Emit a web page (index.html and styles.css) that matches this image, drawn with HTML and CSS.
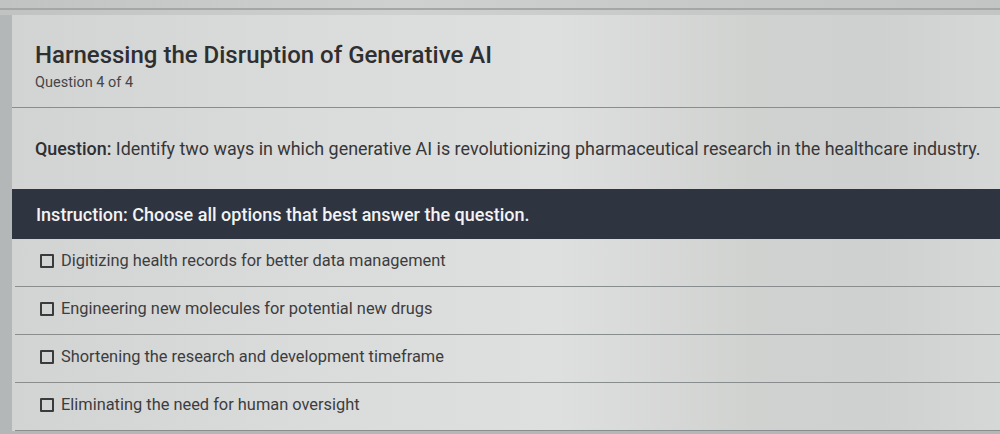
FILE: index.html
```html
<!DOCTYPE html>
<html>
<head>
<meta charset="utf-8">
<link rel="stylesheet" href="styles.css">
</head>
<body>
<div class="page">
  <div class="topbar"><div class="topline"></div></div>
  <div class="card">
    <header class="head">
      <h1 class="title">Harnessing the Disruption of Generative AI</h1>
      <div class="sub">Question 4 of 4</div>
    </header>
    <section class="question">
      <p><span class="qlabel">Question:</span> Identify two ways in which generative AI is revolutionizing pharmaceutical research in the healthcare industry.</p>
    </section>
    <div class="instruction">Instruction: Choose all options that best answer the question.</div>
    <ul class="options">
      <li class="opt"><span class="box"></span>Digitizing health records for better data management</li>
      <li class="opt"><span class="box"></span>Engineering new molecules for potential new drugs</li>
      <li class="opt"><span class="box"></span>Shortening the research and development timeframe</li>
      <li class="opt"><span class="box"></span>Eliminating the need for human oversight</li>
    </ul>
  </div>
</div>
</body>
</html>
```
FILE: styles.css
```css
html, body {
  margin: 0;
  padding: 0;
}
body {
  width: 1000px;
  height: 434px;
  overflow: hidden;
  background: #b4b7b7;
  font-family: Roboto, "Liberation Sans", sans-serif;
  color: #343536;
}
.page {
  display: flex;
  flex-direction: column;
}
.topbar {
  height: 15px;
  background: linear-gradient(90deg, #c1c3c3 0%, #cfd0d0 40%, #c7c9c8 70%, #c3c5c5 100%);
  display: flex;
  align-items: flex-end;
}
.topline {
  height: 2px;
  width: 100%;
  background: #a4a7a7;
  margin-bottom: 5px;
}
.card {
  margin-left: 12px;
  background: linear-gradient(90deg, #d2d3d3 0%, #dadbdb 30%, #dedfdf 55%, #d0d2d0 75%, #cfd1d1 88%, #d6d7d7 100%);
  display: flex;
  flex-direction: column;
}
.head {
  padding: 26px 0 15px 23px;
  border-bottom: 1px solid #8a8d8d;
}
.title {
  margin: 0;
  font-size: 24px;
  line-height: 28px;
  font-weight: 500;
  color: #2e2f31;
}
.sub {
  margin-top: 5px;
  font-size: 14.5px;
  line-height: 18px;
  color: #454647;
}
.question {
  height: 81px;
  display: flex;
  align-items: center;
  padding-left: 23px;
}
.question p {
  margin: 0;
  font-size: 17.9px;
  line-height: 22px;
  color: #363738;
}
.qlabel {
  font-weight: 500;
  color: #2e2f31;
}
.instruction {
  height: 50px;
  display: flex;
  align-items: center;
  padding-left: 24px;
  background: #2f3441;
  color: #f2f3f4;
  font-size: 18px;
  font-weight: 500;
}
.options {
  list-style: none;
  margin: 0 0 0 3px;
  padding: 0;
}
.opt {
  height: 43px;
  padding-bottom: 4px;
  display: flex;
  align-items: center;
  padding-left: 25px;
  font-size: 16.4px;
  color: #3c3d3e;
  border-bottom: 1px solid #8a8d8d;
}
.box {
  width: 10px;
  height: 10px;
  border: 2px solid #3a3b3d;
  border-radius: 1px;
  margin-right: 7px;
  flex: none;
}
```
